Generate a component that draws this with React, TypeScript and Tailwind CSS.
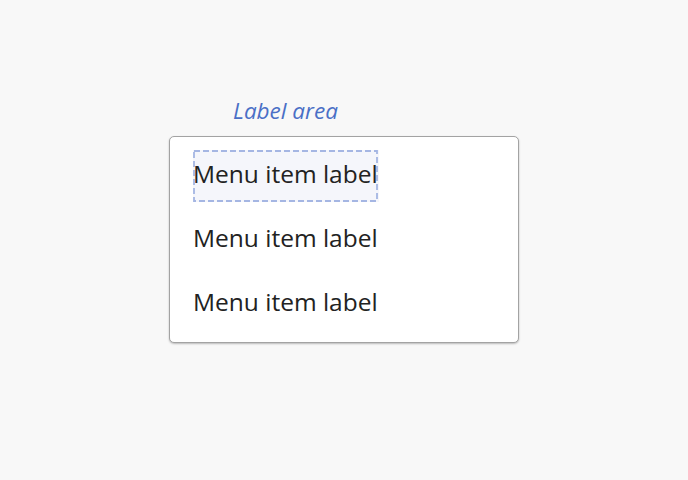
export default function App() {
  const font = { fontFamily: '"Open Sans", "Noto Sans", sans-serif' };
  return (
    <div className="h-[480px] w-[688px] bg-[#f8f8f8] pt-[96px] pl-[169px]" style={font}>
      <div className="ml-[24px] flex h-[40px] w-[185px] justify-center">
        <span className="text-[22.5px] italic leading-[30px] text-[#4a6fc6]">Label area</span>
      </div>
      <div className="w-[350px] rounded-[5px] border border-[#a3a3a3] bg-white pt-[7px] pb-[9px] shadow-[0_1px_2px_rgba(0,0,0,0.25)]">
        <div className="flex h-[63px] items-center pl-[23px]">
          <div className="relative flex h-[52px] items-center bg-[#f5f6fb] pr-[1px] pb-[3px]">
            <svg className="absolute inset-0 h-full w-full">
              <rect x="1" y="1" width="183" height="50" fill="none" stroke="#a5b6e3" strokeWidth="1.8" strokeDasharray="6 3" />
            </svg>
            <span className="text-[24.5px] leading-[30px] text-[#222222]">Menu item label</span>
          </div>
        </div>
        <div className="flex h-[63px] items-center pl-[23px] pb-[1px]">
          <span className="text-[24.5px] leading-[30px] text-[#222222]">Menu item label</span>
        </div>
        <div className="flex h-[63px] items-center pl-[23px]">
          <span className="text-[24.5px] leading-[30px] text-[#222222]">Menu item label</span>
        </div>
      </div>
    </div>
  );
}
